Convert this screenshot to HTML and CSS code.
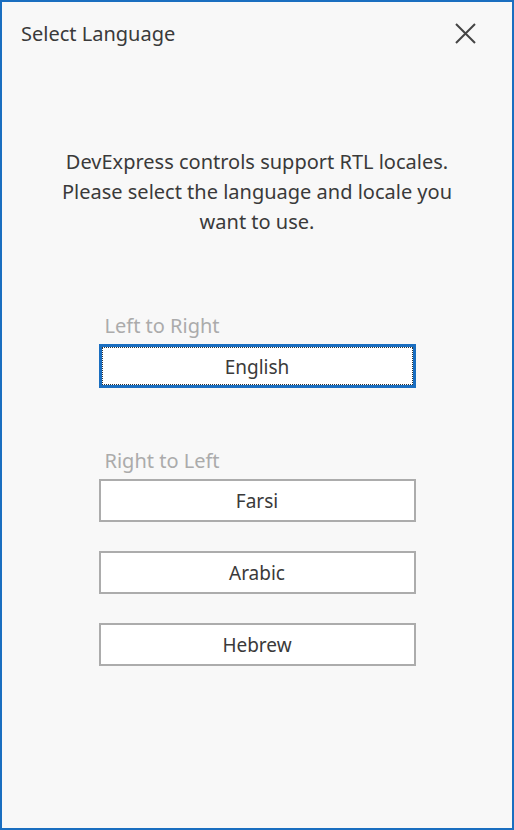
FILE: index.html
```html
<!DOCTYPE html>
<html>
<head>
<meta charset="utf-8">
<link rel="stylesheet" href="styles.css">
</head>
<body>
<div class="window">
  <div class="titlebar">
    <span class="title">Select Language</span>
    <span class="close">
      <svg width="21" height="21" viewBox="0 0 21 21"><path d="M1 1 L20 20 M20 1 L1 20" stroke="#444" stroke-width="2" fill="none"/></svg>
    </span>
  </div>
  <p class="desc">DevExpress controls support RTL locales.<br>Please select the language and locale you<br>want to use.</p>
  <div class="group">
    <div class="label">Left to Right</div>
    <div class="btn focused"><span class="inner">English</span></div>
  </div>
  <div class="group rtl">
    <div class="label">Right to Left</div>
    <div class="btn"><span class="inner">Farsi</span></div>
    <div class="btn"><span class="inner">Arabic</span></div>
    <div class="btn"><span class="inner">Hebrew</span></div>
  </div>
</div>
</body>
</html>
```

FILE: styles.css
```css
html, body {
  margin: 0;
  padding: 0;
}
body {
  width: 514px;
  height: 830px;
  font-family: "Noto Sans", "Open Sans", sans-serif;
  color: #333;
}
.window {
  box-sizing: border-box;
  width: 514px;
  height: 830px;
  border: 2px solid #1a6ec0;
  background: #f8f8f8;
  display: flex;
  flex-direction: column;
  align-items: center;
}
.titlebar {
  align-self: stretch;
  display: flex;
  justify-content: space-between;
  align-items: center;
  height: 64px;
  padding: 0 36px 0 19px;
  box-sizing: border-box;
}
.title {
  font-size: 20px;
  color: #3a3a3a;
  margin-top: -2px;
}
.close {
  display: flex;
  width: 21px;
  height: 21px;
  margin-top: -2px;
}
.desc {
  margin: 81px 0 0 0;
  text-align: center;
  font-size: 20px;
  line-height: 30px;
  color: #3a3a3a;
}
.group {
  width: 317px;
  display: flex;
  flex-direction: column;
  gap: 29px;
  margin-top: 76px;
}
.group.rtl {
  margin-top: 60px;
}
.label {
  font-size: 20px;
  line-height: 26px;
  color: #ababab;
  padding-left: 6px;
  margin-bottom: -24px;
}
.btn {
  box-sizing: border-box;
  height: 43px;
  background: #fff;
  border: 2px solid #acacac;
  display: flex;
}
.btn .inner {
  flex: 1;
  display: flex;
  align-items: center;
  justify-content: center;
  font-size: 19px;
  color: #3a3a3a;
  padding-top: 1px;
}
.btn.focused {
  height: 44px;
  border: 3px solid #1a6ec0;
}
.btn.focused .inner {
  border: 1px dotted #333;
}
```
